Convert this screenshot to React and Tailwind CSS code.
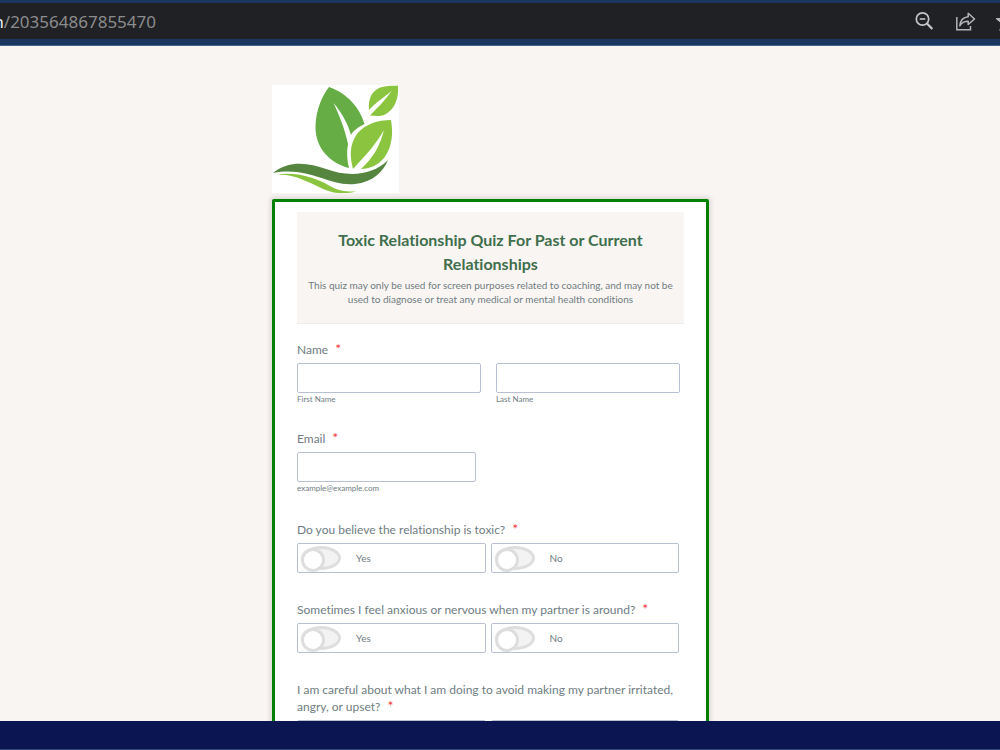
const questions = [
  { id: "toxic", text: "Do you believe the relationship is toxic?" },
  { id: "anxious", text: "Sometimes I feel anxious or nervous when my partner is around?" },
  {
    id: "careful",
    text: "I am careful about what I am doing to avoid making my partner irritated, angry, or upset?",
  },
];

function Required() {
  return <span className="ml-[7px] text-[14px] leading-none text-[#f23a3c]">*</span>;
}

function BrowserBar() {
  return (
    <header className="shrink-0 border-b border-[#48658f] bg-[#1b365f] pt-[3px] pb-[6px]">
      <div className="flex h-9 items-center justify-between overflow-hidden bg-[#202124]">
        <div className="flex w-[156px] justify-end overflow-hidden pt-[2px] font-['Noto_Sans',sans-serif] text-[17px] leading-6 whitespace-nowrap text-[#8b8c8e]">
          <span className="text-[#e8eaed]">m</span>/203564867855470
        </div>
        <div className="-mr-4 flex items-center gap-5">
          <button type="button" aria-label="Zoom out" className="text-[#c4c5c7]">
            <svg viewBox="0 0 20 20" className="size-5" fill="none" stroke="currentColor">
              <circle cx="8.500" cy="8" r="6.200" strokeWidth="1.7" />
              <path d="M5.700 8h5.600" strokeWidth="1.600" />
              <path d="M13 12.500 18.300 18" strokeWidth="2.300" />
            </svg>
          </button>
          <button type="button" aria-label="Share" className="text-[#b4b5b7]">
            <svg viewBox="0 0 22 20" className="h-5 w-[22px]" fill="none" stroke="currentColor" strokeWidth="1.5">
              <path d="M2.800 6V18.800H16.500V15" />
              <path d="M14.200 2.200 20.500 8 14.200 13.500V10.300C10.500 10.200 7.800 11.600 5.800 14.800 6.200 9.800 9 6.200 14.200 5.700Z" strokeLinejoin="round" />
            </svg>
          </button>
          <button type="button" aria-label="Bookmark" className="text-[#c4c5c7]">
            <svg viewBox="0 0 20 20" className="size-5" fill="none" stroke="currentColor" strokeWidth="1.8">
              <path d="M10 2l2.300 5.600 6.200.5-4.700 4 1.500 6L10 14.800 4.700 18l1.500-6L1.500 8.100l6.200-.5Z" />
            </svg>
          </button>
        </div>
      </div>
    </header>
  );
}

function LeafLogo() {
  return (
    <svg viewBox="0 0 127 108" className="h-[108px] w-[127px] bg-white" role="img" aria-label="Green leaves">
      <path d="M57 2C75 8 88 23 92.500 39C86 42 81 46 79 50C76 39 70 28 61.500 18C67 30 73 44 76 59C74.500 67 75 75 77 83C57 78 43 62 43.500 41C44 25 50 11 57 2Z" fill="#66ad45" />
      <path d="M119 35C121 47 121 61 112 73C106 80 98 84 89 84C101 73 108 61 112 45C105 58 94 70 81 84C78 72 77 60 85 49C93 39 106 35 119 35Z" fill="#8bc540" />
      <path d="M126 0.500C127 13 123 25 112 30C108 31.500 103 31 98 30.500C104 24 112 17 120 5.500C112 13 104 17 97 25C96 15 99 7 107 3C113 0.500 120 1 126 0.500Z" fill="#8bc540" />
      <path d="M1 88C19 74 38 79 54 84C76 92 100 91 116 75C111 87 101 97 83 99C57 102 38 81 1 88Z" fill="#55853f" />
      <path d="M4 90C24 86 44 93 58 101C67 106 75 107 84 106.500C80 108 76 108 72 108H66C55 107 46 101 36 97C25 92 16 89 4 90Z" fill="#8bc540" />
    </svg>
  );
}

function TextField({ id, hint, type = "text" }) {
  return (
    <div>
      <input id={id} type={type} className="block h-[30px] w-full rounded-xs border border-[#b8c0d2] bg-white px-2 text-xs outline-none" />
      <label htmlFor={id} className="block text-[8px] leading-3">{hint}</label>
    </div>
  );
}

function Option({ name, value }) {
  return (
    <label className="flex h-[30px] items-center gap-[15px] rounded-xs border border-[#b8c0d2] bg-white pl-[3px] text-[10px]">
      <input
        type="radio"
        name={name}
        value={value}
        className="relative h-6 w-10 appearance-none rounded-[50%] border-3 border-[#dedede] bg-[#f3f3f3] before:absolute before:-top-px before:-left-[3px] before:size-6 before:rounded-full before:border-3 before:border-[#dedede] before:bg-white"
      />
      {value}
    </label>
  );
}

function Question({ id, text }) {
  return (
    <fieldset>
      <legend className="mb-[5px] text-[12px] leading-[17px]">
        {text}
        <Required />
      </legend>
      <div className="mr-[5px] grid grid-cols-2 gap-[5px]">
        <Option name={id} value="Yes" />
        <Option name={id} value="No" />
      </div>
    </fieldset>
  );
}

export default function App() {
  return (
    <div className="flex h-screen flex-col bg-[#0a1551]">
      <BrowserBar />
      <main className="min-h-0 flex-1 overflow-hidden bg-[#f9f5f2] pt-[39px] pr-[35px] pl-4">
        <div className="mx-auto max-w-[437px]">
          <LeafLogo />
        </div>
        <form className="mx-auto mt-[6px] max-w-[437px] rounded-xs border-3 border-[#008000] bg-white px-[22px] pt-[10px] pb-10 font-['Lato',sans-serif] text-[#6f7d82] shadow-[0_0_4px_2px_#ddd8d5] [font-variant-ligatures:none]">
          <div className="border-b border-[#eceef0] bg-[#f9f5f2] px-2 pt-4 pb-[17px] text-center">
            <h1 className="text-[16px] leading-6 font-bold text-[#3f6f4d]">
              Toxic Relationship Quiz For Past or Current Relationships
            </h1>
            <p className="mt-[2px] text-[10px] leading-[14px]">
              This quiz may only be used for screen purposes related to coaching, and may not be used to diagnose or treat any medical or mental health conditions
            </p>
          </div>
          <fieldset className="mt-[17px]">
            <legend className="mb-[5px] text-[12px] leading-[17px]">
              Name
              <Required />
            </legend>
            <div className="mr-1 grid grid-cols-2 gap-[15px]">
              <TextField id="first-name" hint="First Name" />
              <TextField id="last-name" hint="Last Name" />
            </div>
          </fieldset>
          <fieldset className="mt-[25px]">
            <legend className="mb-[5px] text-[12px] leading-[17px]">
              Email
              <Required />
            </legend>
            <div className="max-w-[179px]">
              <TextField id="email" type="email" hint="example@example.com" />
            </div>
          </fieldset>
          <div className="mt-[27px] flex flex-col gap-7">
            {questions.map((q) => (
              <Question key={q.id} id={q.id} text={q.text} />
            ))}
          </div>
        </form>
      </main>
      <footer className="h-[29px] shrink-0 border-b border-[#30477a] bg-[#0a1551]" />
    </div>
  );
}
